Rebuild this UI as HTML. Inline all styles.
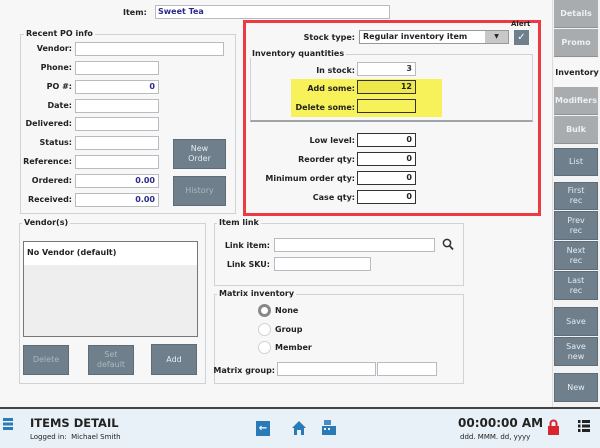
<!DOCTYPE html>
<html><head><meta charset="utf-8"><style>
*{box-sizing:border-box;margin:0;padding:0}
body{width:600px;height:448px;overflow:hidden;background:#f7f7f7;font-family:"DejaVu Sans","Liberation Sans",sans-serif;font-size:8px;font-weight:bold;color:#222;position:relative}
.a{position:absolute}
.lbl{position:absolute;text-align:right;white-space:nowrap}
.in{position:absolute;background:#fff;border:1px solid #b8bcc0;height:14px;font-size:8px;color:#2a2a8a;text-align:right;padding-right:3px;line-height:12px}
.fs{position:absolute;border:1px solid #cfd3d6}
.lg{position:absolute;background:#f7f7f7;padding:0 2px;white-space:nowrap}
.btn{position:absolute;background:#6f7f8b;color:#e8ecef;font-weight:normal;font-size:8px;text-align:center;display:flex;align-items:center;justify-content:center;line-height:10px;border:1px solid #5d6c77}
.btn.dis{color:#aeb8bf}
.tab{position:absolute;left:554px;width:44px;background:#a9acaf;color:#eef0f1;font-size:8px;display:flex;align-items:center;justify-content:center;border-bottom:1px solid #8f9295}
.rb{position:absolute;left:554px;width:44px;background:#6f7f8b;color:#e8ecef;font-size:8px;font-weight:normal;text-align:center;display:flex;align-items:center;justify-content:center;line-height:10px;border:1px solid #5d6c77}
.ib{position:absolute;background:#fff;border:1px solid #333;height:14px;font-size:8px;text-align:right;padding-right:3px;line-height:12px}
.radio{position:absolute;width:13px;height:13px;border-radius:50%;background:#fff;border:1px solid #cfd3d6}
</style></head><body>
<div class="lbl" style="left:123px;top:8px">Item:</div>
<div class="in" style="left:155px;top:5px;width:235px;text-align:left;padding-left:2px;color:#2a2a8a">Sweet Tea</div>

<div class="fs" style="left:20px;top:34px;width:216px;height:180px"></div>
<div class="lg" style="left:24px;top:29px">Recent PO info</div>
<div class="lbl" style="right:528px;top:44px">Vendor:</div><div class="in" style="left:75px;top:42px;width:149px"></div>
<div class="lbl" style="right:528px;top:63px">Phone:</div><div class="in" style="left:75px;top:61px;width:84px"></div>
<div class="lbl" style="right:528px;top:82px">PO #:</div><div class="in" style="left:75px;top:80px;width:84px">0</div>
<div class="lbl" style="right:528px;top:101px">Date:</div><div class="in" style="left:75px;top:99px;width:84px"></div>
<div class="lbl" style="right:528px;top:119px">Delivered:</div><div class="in" style="left:75px;top:117px;width:84px"></div>
<div class="lbl" style="right:528px;top:138px">Status:</div><div class="in" style="left:75px;top:136px;width:84px"></div>
<div class="lbl" style="right:528px;top:157px">Reference:</div><div class="in" style="left:75px;top:155px;width:84px"></div>
<div class="lbl" style="right:528px;top:176px">Ordered:</div><div class="in" style="left:75px;top:174px;width:84px">0.00</div>
<div class="lbl" style="right:528px;top:195px">Received:</div><div class="in" style="left:75px;top:193px;width:84px">0.00</div>
<div class="btn" style="left:173px;top:139px;width:53px;height:30px">New<br>Order</div>
<div class="btn dis" style="left:173px;top:176px;width:53px;height:30px">History</div>

<div class="a" style="left:243px;top:20px;width:298px;height:196px;border:3px solid #ec3a42"></div>
<div class="lbl" style="right:245px;top:33px">Stock type:</div>
<div class="a" style="left:359px;top:30px;width:150px;height:14px;background:#fff;border:1px solid #999;font-size:8px;padding-left:3px;line-height:12px">Regular inventory item</div>
<div class="a" style="left:485px;top:31px;width:23px;height:12px;background:#c8c8c8;font-size:6px;text-align:center;line-height:12px">▼</div>
<div class="a" style="left:511px;top:20px;font-size:7px">Alert</div>
<div class="a" style="left:514px;top:30px;width:15px;height:15px;background:#6f7f8b;color:#fff;font-size:10px;text-align:center;line-height:15px">✓</div>
<div class="a" style="left:250px;top:54px;width:283px;height:68px;border:1px solid #cfd3d6;border-bottom:2px solid #a0a4a8"></div>
<div class="lg" style="left:250px;top:49px;background:#f7f7f7">Inventory quantities</div>
<div class="lbl" style="right:245px;top:66px">In stock:</div><div class="in" style="left:357px;top:62px;width:59px;color:#333">3</div>
<div class="a" style="left:291px;top:79px;width:151px;height:38px;background:#f7f25a"></div>
<div class="lbl" style="right:245px;top:84px">Add some:</div><div class="ib" style="left:357px;top:80px;width:59px;background:#efe84a">12</div>
<div class="lbl" style="right:245px;top:103px">Delete some:</div><div class="ib" style="left:357px;top:99px;width:59px;background:#f7f25a"></div>
<div class="lbl" style="right:245px;top:136px">Low level:</div><div class="ib" style="left:357px;top:133px;width:59px">0</div>
<div class="lbl" style="right:245px;top:155px">Reorder qty:</div><div class="ib" style="left:357px;top:152px;width:59px">0</div>
<div class="lbl" style="right:245px;top:174px">Minimum order qty:</div><div class="ib" style="left:357px;top:171px;width:59px">0</div>
<div class="lbl" style="right:245px;top:193px">Case qty:</div><div class="ib" style="left:357px;top:190px;width:59px">0</div>

<div class="fs" style="left:19px;top:223px;width:187px;height:161px"></div>
<div class="lg" style="left:22px;top:218px">Vendor(s)</div>
<div class="a" style="left:23px;top:241px;width:175px;height:96px;background:#eee;border:1px solid #777"></div>
<div class="a" style="left:24px;top:242px;width:173px;height:23px;background:#fff;padding:6px 3px;font-size:8px">No Vendor (default)</div>
<div class="btn dis" style="left:23px;top:345px;width:46px;height:30px">Delete</div>
<div class="btn dis" style="left:88px;top:345px;width:46px;height:30px">Set<br>default</div>
<div class="btn" style="left:151px;top:344px;width:46px;height:31px">Add</div>

<div class="fs" style="left:214px;top:223px;width:250px;height:63px"></div>
<div class="lg" style="left:217px;top:218px">Item link</div>
<div class="lbl" style="right:330px;top:241px">Link item:</div><div class="in" style="left:274px;top:238px;width:161px"></div>
<svg class="a" style="left:442px;top:238px" width="12" height="13" viewBox="0 0 12 13"><circle cx="5" cy="5" r="3.6" fill="none" stroke="#333" stroke-width="1.5"/><line x1="7.6" y1="7.8" x2="11" y2="11.5" stroke="#333" stroke-width="1.8"/></svg>
<div class="lbl" style="right:330px;top:260px">Link SKU:</div><div class="in" style="left:274px;top:257px;width:97px"></div>

<div class="fs" style="left:214px;top:294px;width:250px;height:90px"></div>
<div class="lg" style="left:217px;top:289px">Matrix inventory</div>
<div class="radio" style="left:258px;top:304px;border:3px solid #888"></div><div class="a" style="left:275px;top:306px">None</div>
<div class="radio" style="left:258px;top:323px"></div><div class="a" style="left:275px;top:325px">Group</div>
<div class="radio" style="left:258px;top:341px"></div><div class="a" style="left:275px;top:343px">Member</div>
<div class="lbl" style="right:325px;top:366px">Matrix group:</div>
<div class="in" style="left:277px;top:362px;width:99px"></div><div class="in" style="left:377px;top:362px;width:60px"></div>

<div class="a" style="left:552px;top:0;width:48px;height:408px;background:#f3f3f3;border-left:1px solid #ddd"></div>
<div class="tab" style="top:0;height:28px">Details</div>
<div class="tab" style="top:29px;height:28px">Promo</div>
<div class="a" style="left:554px;top:58px;width:46px;height:29px;background:#f7f7f7;font-size:8px;display:flex;align-items:center;justify-content:center">Inventory</div>
<div class="tab" style="top:87px;height:28px">Modifiers</div>
<div class="tab" style="top:116px;height:28px">Bulk</div>
<div class="rb" style="top:148px;height:28px">List</div>
<div class="rb" style="top:182px;height:28px">First<br>rec</div>
<div class="rb" style="top:211px;height:29px">Prev<br>rec</div>
<div class="rb" style="top:241px;height:29px">Next<br>rec</div>
<div class="rb" style="top:271px;height:29px">Last<br>rec</div>
<div class="rb" style="top:307px;height:29px">Save</div>
<div class="rb" style="top:337px;height:29px">Save<br>new</div>
<div class="rb" style="top:373px;height:29px">New</div>

<div class="a" style="left:0;top:407px;width:600px;height:41px;background:#e8f1f8;border-top:2px solid #444"></div>
<svg class="a" style="left:3px;top:418px" width="10" height="12"><rect x="0" y="0" width="10" height="3" fill="#2a7ab8"/><rect x="0" y="4.5" width="10" height="3" fill="#2a7ab8"/><rect x="0" y="9" width="10" height="3" fill="#2a7ab8"/></svg>
<div class="a" style="left:30px;top:416px;font-size:11.5px">ITEMS DETAIL</div>
<div class="a" style="left:30px;top:433px;font-size:7px;font-weight:normal">Logged in:&nbsp; Michael Smith</div>
<div class="a" style="left:256px;top:421px;width:14px;height:15px;background:#2a7ab8;color:#fff;font-size:10px;text-align:center;line-height:15px">←</div>
<svg class="a" style="left:291px;top:420px" width="16" height="16" viewBox="0 0 16 16"><path d="M8 1 L15 8 L13 8 L13 15 L10 15 L10 10 L6 10 L6 15 L3 15 L3 8 L1 8 Z" fill="#2a7ab8"/></svg>
<svg class="a" style="left:321px;top:419px" width="16" height="17" viewBox="0 0 16 17"><rect x="3" y="1" width="7" height="5" fill="#4a8cc4"/><rect x="1" y="7" width="14" height="9" fill="#2a7ab8"/><rect x="3" y="9" width="2" height="2" fill="#e8f1f8"/><rect x="7" y="9" width="2" height="2" fill="#e8f1f8"/></svg>
<div class="a" style="left:458px;top:416px;font-size:12px">00:00:00 AM</div>
<div class="a" style="left:460px;top:433px;font-size:7px;font-weight:normal">ddd. MMM. dd, yyyy</div>
<svg class="a" style="left:548px;top:419px" width="11" height="16" viewBox="0 0 11 16"><path d="M2.5 7 V4.5 a3 3 0 0 1 6 0 V7" fill="none" stroke="#d9252e" stroke-width="2"/><rect x="0" y="7" width="11" height="9" fill="#d9252e"/></svg>
<svg class="a" style="left:578px;top:420px" width="12" height="12"><rect x="0" y="0" width="2.5" height="3" fill="#222"/><rect x="4" y="0" width="8" height="3" fill="#222"/><rect x="0" y="4.5" width="2.5" height="3" fill="#222"/><rect x="4" y="4.5" width="8" height="3" fill="#222"/><rect x="0" y="9" width="2.5" height="3" fill="#222"/><rect x="4" y="9" width="8" height="3" fill="#222"/></svg>
</body></html>
